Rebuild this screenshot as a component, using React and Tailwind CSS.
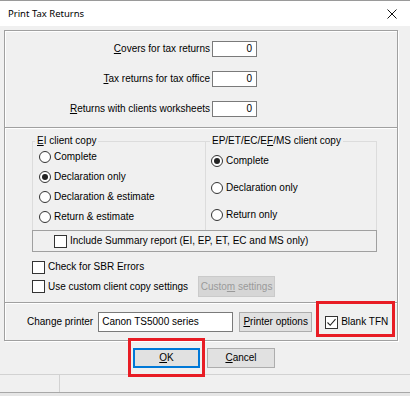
import React from "react";

const U = ({ children }) => <span className="underline underline-offset-[1px] decoration-[1px]">{children}</span>;

function Radio({ checked, children }) {
  return (
    <div className="flex items-center gap-[3px]">
      <span className="w-[12px] h-[12px] rounded-full border border-[#333] bg-white flex items-center justify-center shrink-0">
        {checked && <span className="w-[6px] h-[6px] rounded-full bg-[#222]" />}
      </span>
      <span>{children}</span>
    </div>
  );
}

function Check({ checked }) {
  return (
    <span className="w-[13px] h-[13px] border border-[#333] bg-white flex items-center justify-center shrink-0">
      {checked && (
        <svg width="11" height="11" viewBox="0 0 11 11">
          <path d="M1.5 5.5 L4.2 8.3 L9.5 2.2" fill="none" stroke="#222" strokeWidth="1.1" />
        </svg>
      )}
    </span>
  );
}

export default function App() {
  return (
    <div className="relative w-[410px] h-[396px] overflow-hidden bg-[#f0f0f0] text-black font-['Liberation_Sans',Arial,sans-serif] text-[10px] leading-[12px] flex flex-col">
      {/* title bar */}
      <div className="h-[26px] shrink-0 bg-white border-t border-[#9a9a9a] flex items-center justify-between pl-[8px] pr-[13px]">
        <span className="font-['Noto_Sans',sans-serif] text-[9.5px] leading-[12px]">Print Tax Returns</span>
        <svg width="10" height="10" viewBox="0 0 10 10">
          <path d="M0.5 0.5 L9.5 9.5 M9.5 0.5 L0.5 9.5" stroke="#111" strokeWidth="1" />
        </svg>
      </div>

      {/* main box */}
      <div className="mt-[4px] ml-[4px] w-[394px] border border-[#a0a0a0] shadow-[inset_1px_1px_0_#fff,1px_1px_0_#fff] flex flex-col">
        {/* section A */}
        <div className="pt-[10px] pb-[10px] flex flex-col gap-[14px]">
          {[
            [<><U>C</U>overs for tax returns</>],
            [<><U>T</U>ax returns for tax office</>],
            [<><U>R</U>eturns with clients worksheets</>],
          ].map(([label], i) => (
            <div key={i} className="flex items-center h-[16px]">
              <div className="w-[207px] text-right pr-[2px]">{label}</div>
              <div className="w-[45px] h-[16px] bg-white border border-[#7a7a7a] flex items-center justify-end pr-[4px]">0</div>
            </div>
          ))}
        </div>
        <div className="h-px bg-[#a0a0a0]" />
        <div className="h-px bg-white" />

        {/* section B */}
        <div className="pt-[6px] pl-[27px] pb-[5px] flex flex-col">
          <div className="flex items-stretch">
            <fieldset className="w-[173px] min-w-0 border-t border-l border-[#dcdcdc] pb-[3px]">
              <legend className="ml-[2px] px-[2px] leading-[12px]"><U>E</U>I client copy</legend>
              <div className="flex flex-col pl-[6px]">
                <div className="h-[20px] flex items-center"><Radio>Complete</Radio></div>
                <div className="h-[20px] flex items-center"><Radio checked>Declaration only</Radio></div>
                <div className="h-[20px] flex items-center"><Radio>Declaration &amp; estimate</Radio></div>
                <div className="h-[20px] flex items-center"><Radio>Return &amp; estimate</Radio></div>
              </div>
            </fieldset>
            <fieldset className="w-[172px] min-w-0 border-t border-l border-r border-[#dcdcdc] pb-[2px]">
              <legend className="ml-[4px] px-[2px] leading-[12px]">EP/ET/EC/E<U>F</U>/MS client copy</legend>
              <div className="flex flex-col pl-[5px]">
                <div className="h-[27px] flex items-center"><Radio checked>Complete</Radio></div>
                <div className="h-[27px] flex items-center"><Radio>Declaration only</Radio></div>
                <div className="h-[27px] flex items-center"><Radio>Return only</Radio></div>
              </div>
            </fieldset>
          </div>
          <div className="w-[345px] h-[22px] border border-[#a0a0a0] flex items-center pl-[21px] gap-[3px]">
            <Check />
            <span>Include Summary report (EI, EP, ET, EC and MS only)</span>
          </div>
          <div className="mt-[6px] h-[18px] flex items-center gap-[3px]">
            <Check />
            <span>Check for SBR Errors</span>
          </div>
          <div className="h-[21px] flex items-center">
            <Check />
            <span className="ml-[3px]">Use custom client copy settings</span>
            <div className="ml-[10px] w-[77px] h-[21px] bg-[#d6d6d6] border border-[#cacaca] text-[#9a9a9a] flex items-center justify-center">
              <span>Custo<U>m</U> settings</span>
            </div>
          </div>
        </div>
        <div className="h-px bg-[#a0a0a0]" />
        <div className="h-px bg-white" />

        {/* printer row */}
        <div className="h-[36px] flex items-center pl-[22px]">
          <span>Change printer</span>
          <div className="ml-[5px] w-[135px] h-[20px] bg-white border border-[#7a7a7a] flex items-center pl-[3px]">Canon TS5000 series</div>
          <div className="ml-[6px] w-[73px] h-[20px] bg-[#e1e1e1] border border-[#adadad] flex items-center justify-center">
            <span><U>P</U>rinter options</span>
          </div>
          <div className="ml-[13px] flex items-center gap-[3px]">
            <Check checked />
            <span>Blank TFN</span>
          </div>
        </div>
      </div>

      {/* buttons */}
      <div className="mt-[7px] pl-[133px] flex gap-[7px]">
        <div className="w-[67px] h-[20px] bg-[#e1e1e1] border border-[#0078d7] shadow-[inset_0_0_0_1px_#0078d7] flex items-center justify-center">
          <span><U>O</U>K</span>
        </div>
        <div className="w-[68px] h-[20px] bg-[#e1e1e1] border border-[#adadad] flex items-center justify-center">
          <span><U>C</U>ancel</span>
        </div>
      </div>

      {/* status bar */}
      <div className="mt-[6px] h-[18px] border-t border-[#d2d2d2] flex">
        <div className="w-[60px] border-r border-[#d2d2d2]" />
      </div>
      <div className="flex-1 border-t border-[#a8a8a8] bg-[#e6e6e6]" />

      {/* red annotation boxes */}
      <div className="absolute left-[316px] top-[301px] w-[79px] h-[36px] border-[3px] border-[#e81c24]" />
      <div className="absolute left-[128px] top-[338px] w-[77px] h-[39px] border-[3px] border-[#e81c24]" />
    </div>
  );
}
